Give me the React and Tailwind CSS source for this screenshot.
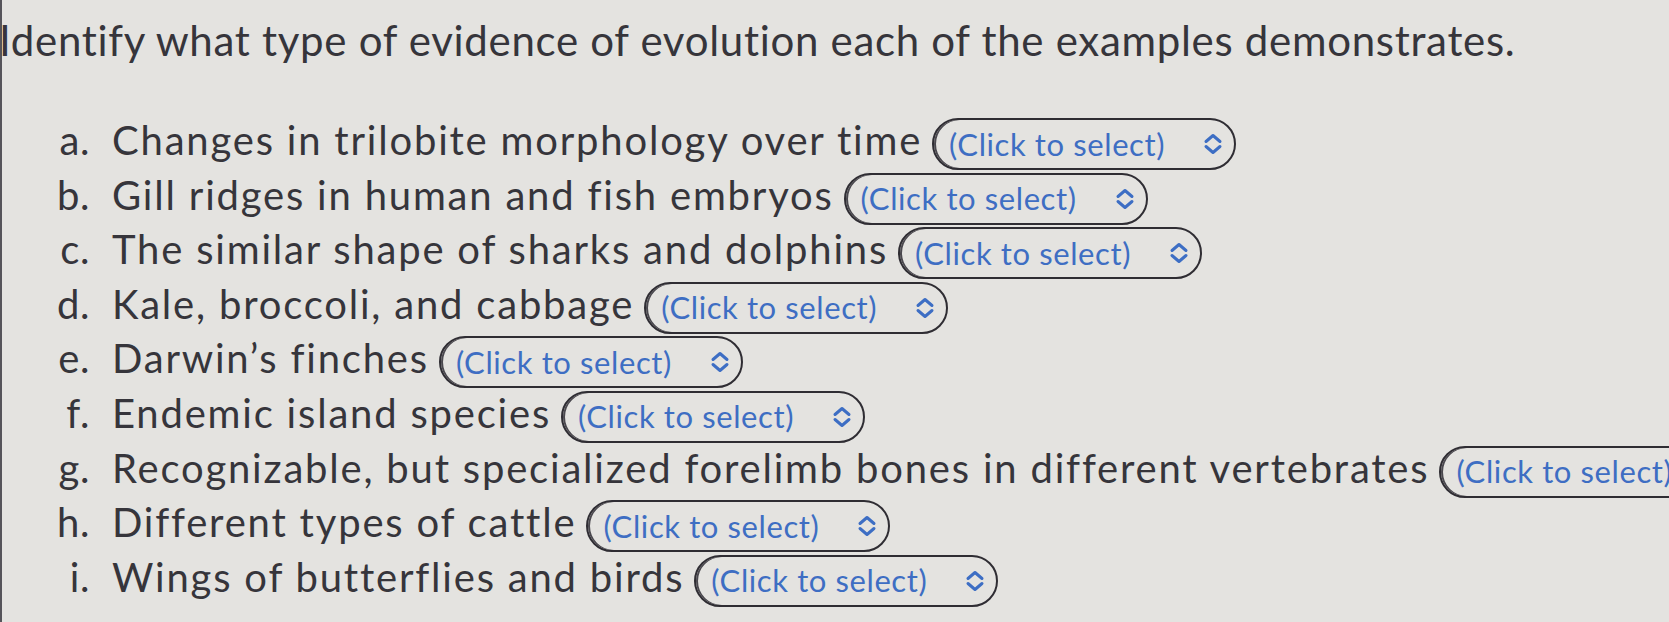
import React from 'react';

const items = [
    { m: 'a.', t: 'Changes in trilobite morphology over time' },
    { m: 'b.', t: 'Gill ridges in human and fish embryos' },
    { m: 'c.', t: 'The similar shape of sharks and dolphins' },
    { m: 'd.', t: 'Kale, broccoli, and cabbage' },
    { m: 'e.', t: 'Darwin\u2019s finches' },
    { m: 'f.', t: 'Endemic island species' },
    { m: 'g.', t: 'Recognizable, but specialized forelimb bones in different vertebrates' },
    { m: 'h.', t: 'Different types of cattle' },
    { m: 'i.', t: 'Wings of butterflies and birds' },
];

function Chevrons() {
    return (
        <svg width="22" height="24" viewBox="0 0 22 24" fill="none" stroke="#3d6ec4" strokeWidth="3" strokeLinecap="round" strokeLinejoin="round">
            <path d="M4 9.5 L11 3.5 L18 9.5" />
            <path d="M4 14.5 L11 20.5 L18 14.5" />
        </svg>
    );
}

function SelectPill() {
    return (
        <div className="shrink-0 ml-[10px] mt-[3px] h-[52px] w-[304px] rounded-full border-2 border-[#2f2d33] bg-[#e4e3e0] flex items-center pl-[15px] pr-[10px] justify-between shadow-[inset_2px_0_0_#4a484e]">
            <span className="text-[31px] leading-none text-[#3e6ec3] tracking-[0.6px]">(Click to select)</span>
            <Chevrons />
        </div>
    );
}

export default function App() {
    return (
        <div className="w-[1669px] h-[622px] overflow-hidden bg-[#e4e3e0] border-l-2 border-[#55545a] text-[#36353b]" style={{ fontFamily: 'Lato, "Open Sans", sans-serif' }}>
            <h1 className="text-[42px] leading-none pt-[19px] -ml-[3px] tracking-[0.7px] whitespace-nowrap font-normal">
                Identify what type of evidence of evolution each of the examples demonstrates.
            </h1>
            <div className="mt-[54px]">
                {items.map((it) => (
                    <div key={it.m} className="h-[54.6px] flex items-start whitespace-nowrap">
                        <span className="w-[88px] mt-[5px] text-right text-[40px] leading-[40px] tracking-[0.6px] shrink-0">{it.m}</span>
                        <span className="ml-[22px] mt-[5px] text-[40px] leading-[40px] tracking-[1.8px] shrink-0">{it.t}</span>
                        <SelectPill />
                    </div>
                ))}
            </div>
        </div>
    );
}
